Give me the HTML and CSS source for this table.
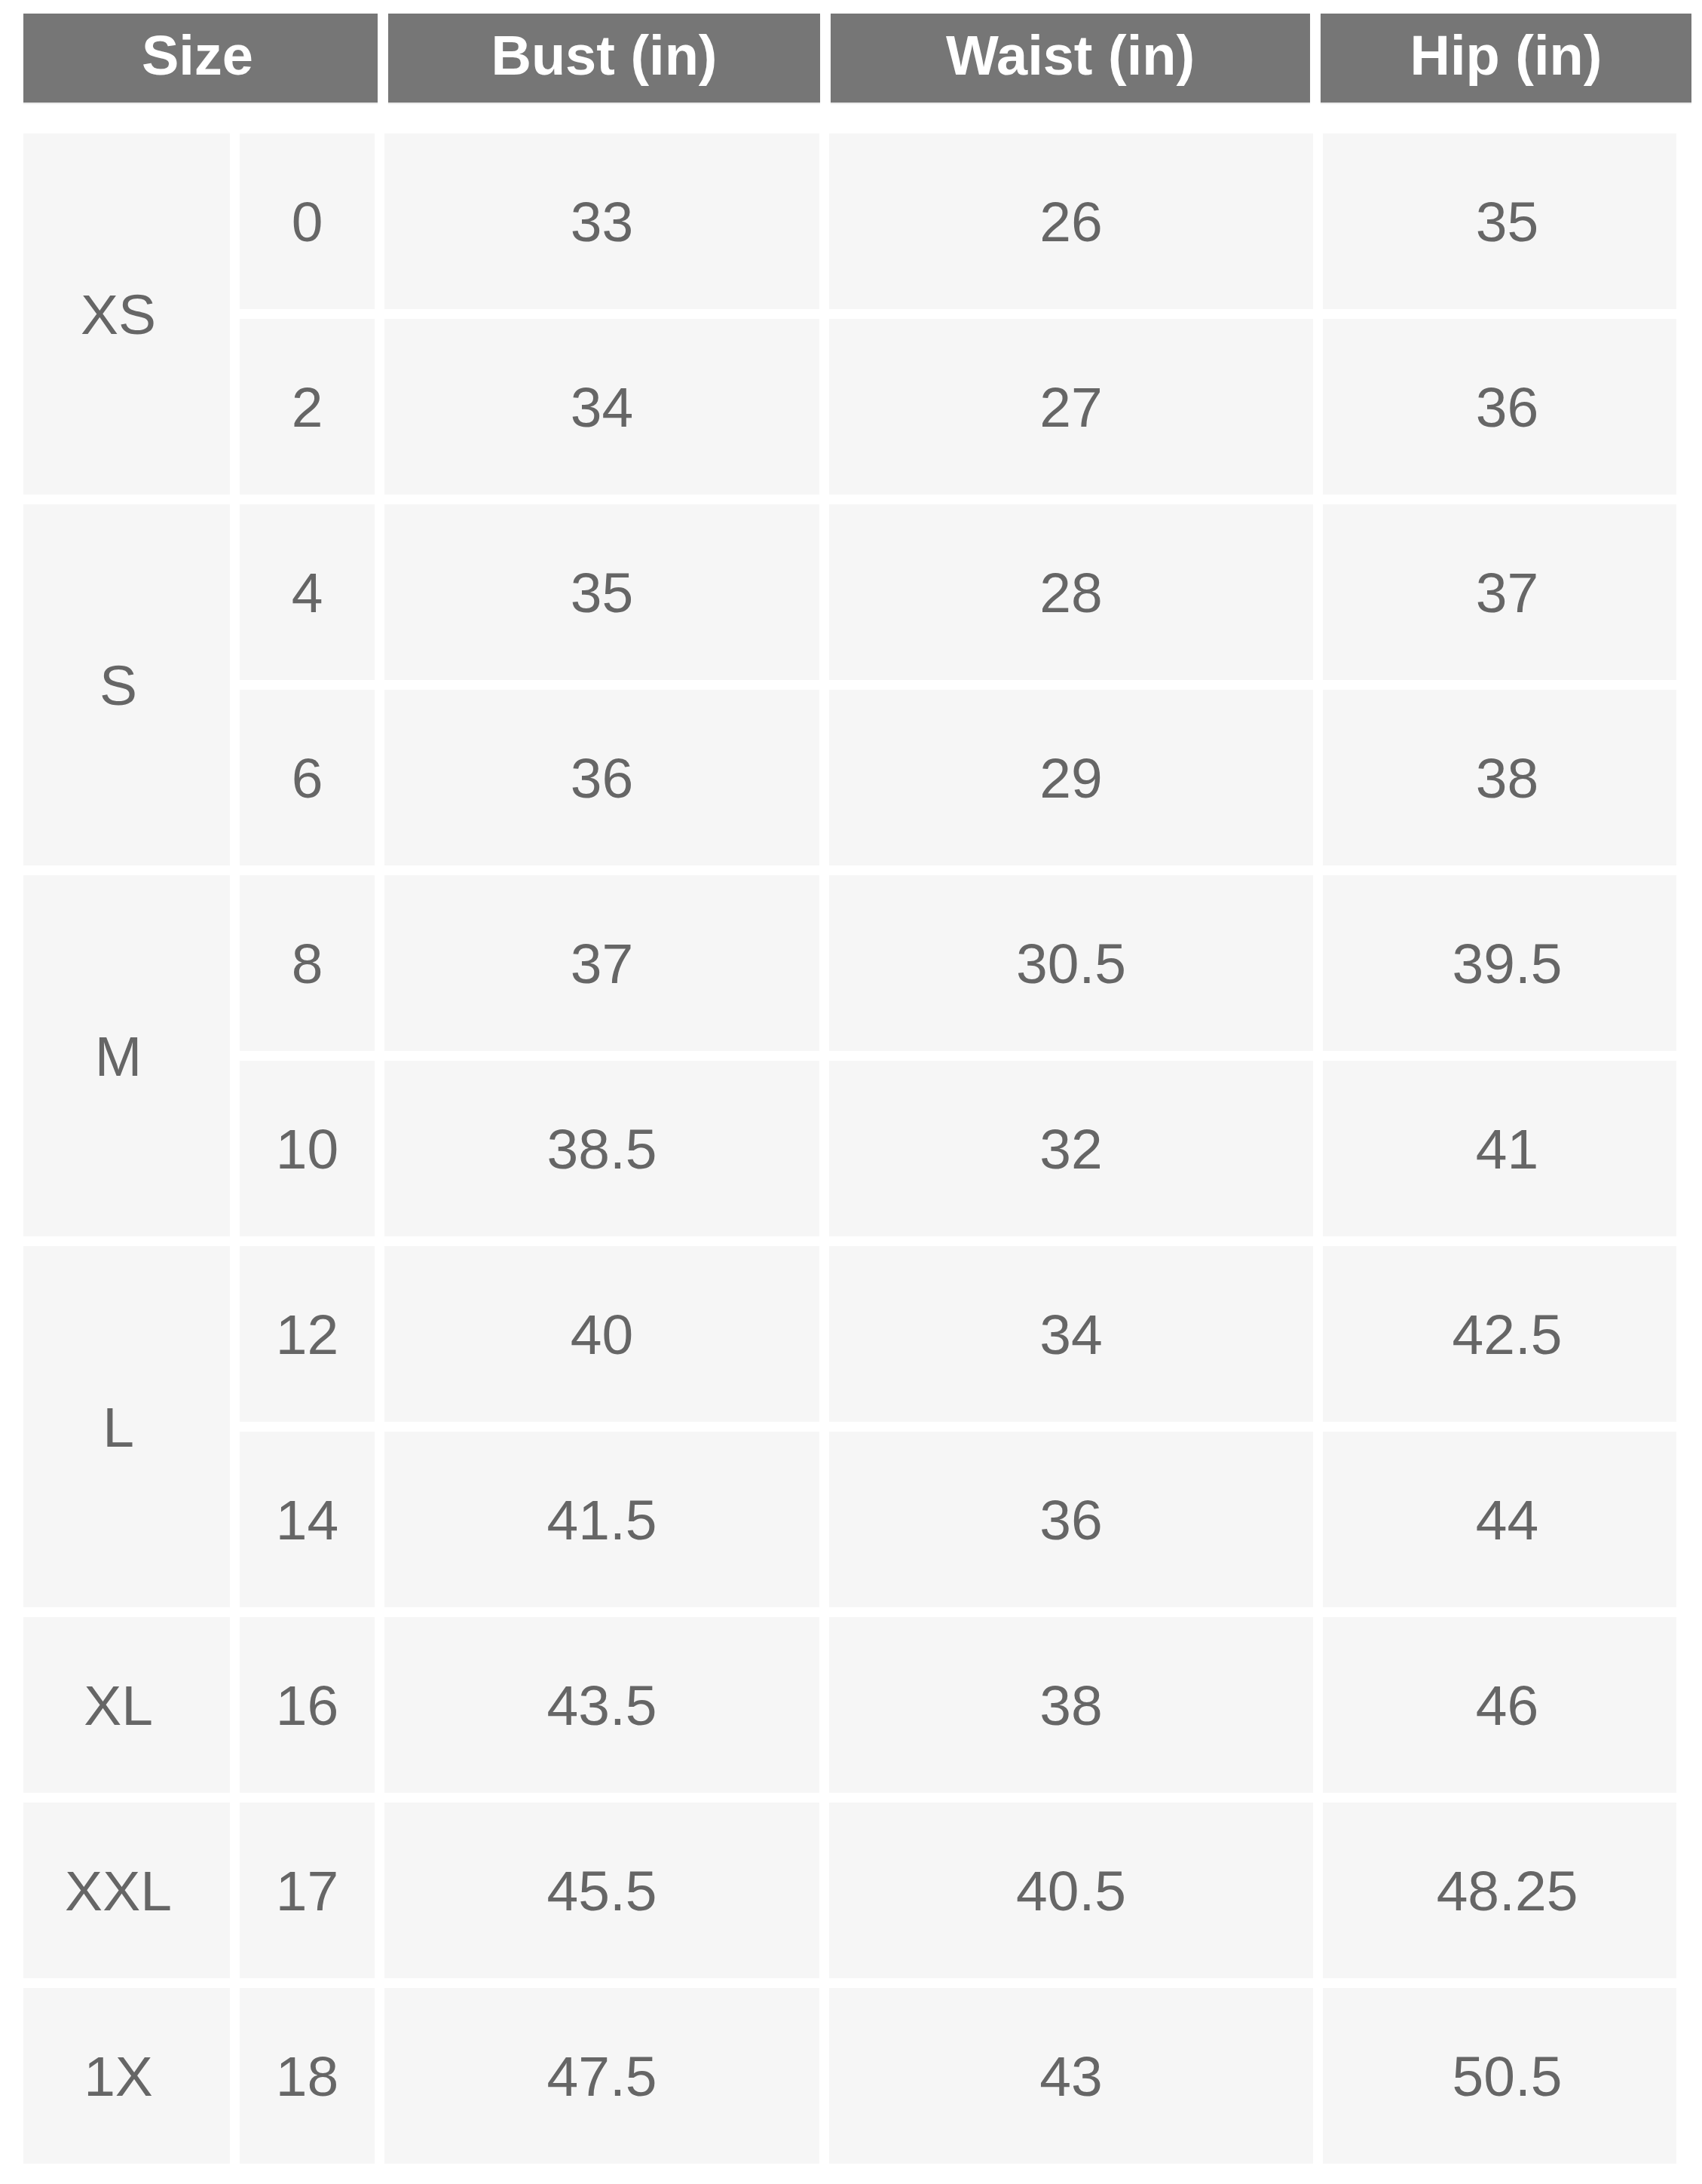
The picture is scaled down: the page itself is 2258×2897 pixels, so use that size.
FILE: index.html
```html
<!DOCTYPE html>
<html lang="en">
<head>
<meta charset="utf-8">
<title>Size Chart</title>
<link rel="stylesheet" href="styles.css">
</head>
<body>
<div class="chart">
  <div class="head">
    <div class="hcell hsize">Size</div>
    <div class="hcell">Bust (in)</div>
    <div class="hcell">Waist (in)</div>
    <div class="hcell">Hip (in)</div>
  </div>
  <div class="body">
    <div class="cell size span2">XS</div>
    <div class="cell">0</div><div class="cell">33</div><div class="cell">26</div><div class="cell hip">35</div>
    <div class="cell">2</div><div class="cell">34</div><div class="cell">27</div><div class="cell hip">36</div>

    <div class="cell size span2">S</div>
    <div class="cell">4</div><div class="cell">35</div><div class="cell">28</div><div class="cell hip">37</div>
    <div class="cell">6</div><div class="cell">36</div><div class="cell">29</div><div class="cell hip">38</div>

    <div class="cell size span2">M</div>
    <div class="cell">8</div><div class="cell">37</div><div class="cell">30.5</div><div class="cell hip">39.5</div>
    <div class="cell">10</div><div class="cell">38.5</div><div class="cell">32</div><div class="cell hip">41</div>

    <div class="cell size span2">L</div>
    <div class="cell">12</div><div class="cell">40</div><div class="cell">34</div><div class="cell hip">42.5</div>
    <div class="cell">14</div><div class="cell">41.5</div><div class="cell">36</div><div class="cell hip">44</div>

    <div class="cell size">XL</div>
    <div class="cell">16</div><div class="cell">43.5</div><div class="cell">38</div><div class="cell hip">46</div>

    <div class="cell size">XXL</div>
    <div class="cell">17</div><div class="cell">45.5</div><div class="cell">40.5</div><div class="cell hip">48.25</div>

    <div class="cell size">1X</div>
    <div class="cell">18</div><div class="cell">47.5</div><div class="cell">43</div><div class="cell hip">50.5</div>
  </div>
</div>
</body>
</html>
```
FILE: styles.css
```css
html, body {
  margin: 0;
  padding: 0;
  background: #ffffff;
}

body {
  font-family: "Liberation Sans", Arial, Helvetica, sans-serif;
}

.chart {
  padding: 18px 0 0 31px;
  width: 2258px;
  box-sizing: border-box;
}

.head {
  display: grid;
  grid-template-columns: 470px 573px 636px 492px;
  column-gap: 14px;
  height: 118px;
}

.hcell {
  background: #767676;
  color: #ffffff;
  font-weight: bold;
  font-size: 74px;
  display: flex;
  align-items: center;
  justify-content: center;
  padding-bottom: 8px;
  box-sizing: border-box;
  box-shadow: 0 2px 1px #ececec;
}

.hsize {
  padding-right: 8px;
}

.body {
  margin-top: 41px;
  display: grid;
  grid-template-columns: 274px 179px 577px 642px 469px;
  grid-auto-rows: 233px;
  column-gap: 13px;
  row-gap: 13px;
}

.cell {
  background: #f6f6f6;
  color: #666666;
  font-size: 75px;
  display: flex;
  align-items: center;
  justify-content: center;
  box-sizing: border-box;
}

.size {
  padding-right: 22px;
}

.hip {
  padding-left: 20px;
}

.span2 {
  grid-row: span 2;
}
```
